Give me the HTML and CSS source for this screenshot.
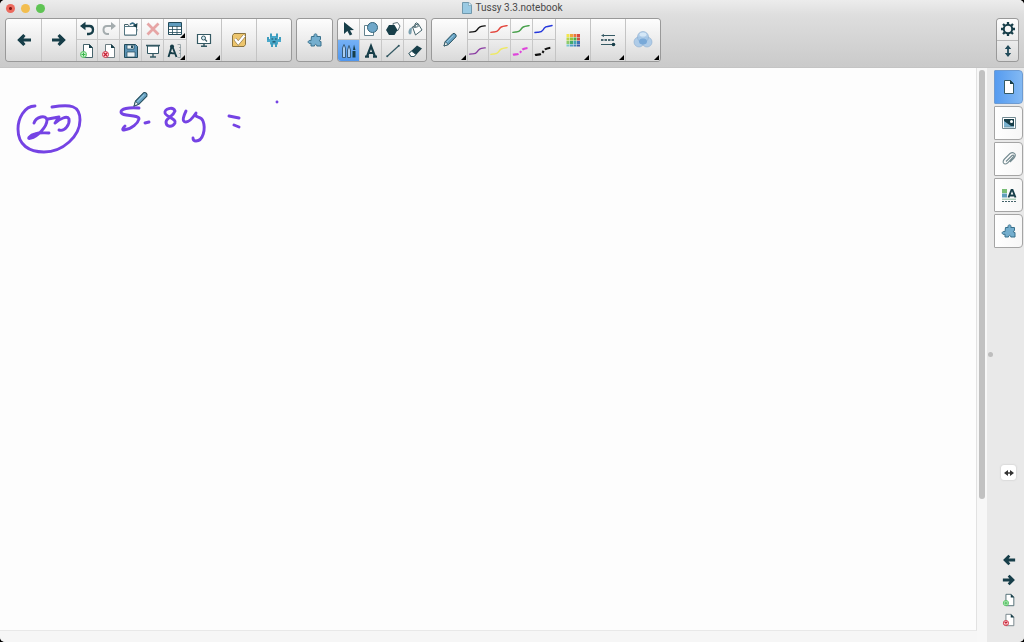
FILE: index.html
```html
<!DOCTYPE html>
<html lang="en">
<head>
<meta charset="utf-8">
<title>Tussy 3.3.notebook</title>
<link rel="stylesheet" href="styles.css">
</head>
<body>
<svg class="sprite" aria-hidden="true">
  <symbol id="arrow-left" viewBox="0 0 16 16"><path d="M1.200 8 7.300 2 9.500 4 7.500 6.400H15V9.600H7.500L9.500 12 7.300 14Z" fill="#173e49"/></symbol>
  <symbol id="arrow-right" viewBox="0 0 16 16"><path d="M14.800 8 8.700 2 6.500 4 8.500 6.400H1V9.600H8.500L6.500 12 8.700 14Z" fill="#173e49"/></symbol>
  <symbol id="page-add" viewBox="0 0 16 16"><path d="M4.500 1.500h6l3 3v10h-9Z" fill="#fff" stroke="#45636b"/><path d="M10 1v4h4Z" fill="#173e49"/><circle cx="4.500" cy="11.500" r="3" fill="#c9f2cd" stroke="#51c45e"/><path d="M2.500 11.500h4M4.500 9.500v4" stroke="#39b34a"/></symbol>
  <symbol id="page-remove" viewBox="0 0 16 16"><path d="M4.500 1.500h6l3 3v10h-9Z" fill="#fff" stroke="#6d7d82"/><path d="M10 1v4h4Z" fill="#173e49"/><circle cx="4.500" cy="11.500" r="3" fill="#fbd5d8" stroke="#d2394a"/><path d="m3 10 3 3m0-3-3 3" stroke="#c51f34" stroke-width="1.300"/></symbol>
  <symbol id="puzzle" viewBox="0 0 16 16"><path d="M4.500 4.500H7.200C5.800 1 11.200 1 9.800 4.500H13.500V7.500Q11.800 8 12.500 9.200L14 9.500V14H9.800C10.300 11.800 7 11.800 7.500 14H4V11.200C.2 12.600.2 7.300 4 8.700Z" fill="#74aece" stroke="#39718c"/></symbol>
  <symbol id="pen" viewBox="0 0 16 16"><path d="M2 14 3.300 9.500 10.800 1.700Q12.200.9 13.400 2.100T14 4.800L6.400 12.500Z" fill="#69a3c4" stroke="#234c5b"/><path d="m3.300 9.700 2.900 2.800L2 14Z" fill="#f4f7f8" stroke="#234c5b" stroke-width=".8"/><path d="m5 10 6.500-6.500" stroke="#93c5dd"/></symbol>
  <symbol id="stroke" viewBox="0 0 22 16"><path d="M2 11.500C5 10.500 8 12.500 10 9S13 5.500 19 4.500" fill="none" stroke="currentColor" stroke-width="1.500" stroke-linecap="round"/></symbol>
  <symbol id="stroke-dash" viewBox="0 0 22 16"><path d="M2 12C5 11 8 12.500 10 9S13 5.500 19 4.500" fill="none" stroke="currentColor" stroke-width="2.200" stroke-dasharray="6 2 2 2"/></symbol>
</svg>
<div class="app">
  <header class="chrome">
    <div class="titlebar">
      <div class="lights"><button class="light red" aria-label="Close"></button><button class="light yellow" aria-label="Minimize"></button><button class="light green" aria-label="Zoom"></button></div>
      <h1 class="title"><svg class="doc" viewBox="0 0 10 12"><path d="M.5.5H7l2.500 2.500v8.500h-9Z" fill="#9acae3" stroke="#7199ad"/><path d="M6.500.500V3.500h3" fill="#e3f3fa" stroke="#7199ad" stroke-width=".6"/></svg>Tussy 3.3.notebook</h1>
    </div>
    <div class="toolbar">
      <div class="group">
        <button class="big" aria-label="Previous page"><svg class="icon"><use href="#arrow-left"/></svg></button>
        <button class="big" aria-label="Next page"><svg class="icon"><use href="#arrow-right"/></svg></button>
        <div class="grid five">
          <button aria-label="Undo"><svg class="icon" viewBox="0 0 16 16"><path d="M5 5h5.500q3.500 0 3.500 3.700T10 13H8" fill="none" stroke="#173e49" stroke-width="2.300"/><path d="M1 5 6.500.8V9.200Z" fill="#173e49"/></svg></button>
          <button aria-label="Redo"><svg class="icon" viewBox="0 0 16 16"><path d="M11 5H6Q2.500 5 2.500 8.700T6 13H8" fill="none" stroke="#a4acae" stroke-width="2"/><path d="M15 5 10 1V9Z" fill="#a4acae"/></svg></button>
          <button aria-label="Open"><svg class="icon" viewBox="0 0 16 16"><path d="M1.500 14V3.500H5l1.500 2H12l2 3-1 5.500Z" fill="#f8fbfc" stroke="#45636b"/><path d="M1.500 14V5.500h12V14Z" fill="#fff" stroke="#527580"/><path d="M7 3.500q3-3 5 .5" fill="none" stroke="#326a84" stroke-width="1.600"/><path d="m14.500 2-.5 5-4-2.500Z" fill="#173e49"/></svg></button>
          <button aria-label="Delete"><svg class="icon" viewBox="0 0 16 16"><path d="m2.500 2.500 11 11m0-11-11 11" stroke="#e6a5a5" stroke-width="2.800"/></svg></button>
          <button class="more" aria-label="Table"><svg class="icon" viewBox="0 0 16 16"><path d="M1.500 1.500h13v12h-13Z" fill="#fff" stroke="#234c5b"/><path d="M2 2h12v3H2Z" fill="#5f9bbd"/><path d="M1.500 5.500h13m-13 3h13m-13 3h13M5.500 5v8.500M10 5v8.500" stroke="#234c5b" stroke-width=".8"/></svg></button>
          <button aria-label="Add page"><svg class="icon"><use href="#page-add"/></svg></button>
          <button aria-label="Delete page"><svg class="icon"><use href="#page-remove"/></svg></button>
          <button aria-label="Save"><svg class="icon" viewBox="0 0 16 16"><path d="M1.500 1.500h11l2 2v11h-13Z" fill="#5c93b4" stroke="#234c5b"/><path d="M4 2h7v4H4ZM4 9h8v5H4Z" fill="#e9f1f5" stroke="#234c5b" stroke-width=".7"/><path d="M8 2.500h2V5H8Z" fill="#234c5b"/></svg></button>
          <button aria-label="Screen shade"><svg class="icon" viewBox="0 0 16 16"><path d="M2.500 3h11v7.500h-11Z" fill="#fff" stroke="#345963"/><path d="M1 2.500h14" stroke="#345963" stroke-width="1.500"/><path d="M8 10.500v3M5 14h6" stroke="#345963" stroke-width="1.400"/></svg></button>
          <button class="more" aria-label="Measurement tools"><svg class="icon" viewBox="0 0 16 16"><path d="M5 2.500 1.500 14M5 2.500 9.500 14M2.500 9q3 2.500 6 .5" fill="none" stroke="#173e49" stroke-width="1.900"/><circle cx="5" cy="3.500" r="2" fill="#173e49"/><path d="M10.500 1.500h3v13h-3M12 4.500h2m-2 3h2m-2 3h2" fill="none" stroke="#8a999e" stroke-width=".8"/></svg></button>
        </div>
        <button class="big more" aria-label="Screen capture"><svg class="icon" viewBox="0 0 16 16"><path d="M1.500 2.500h13v9h-13Z" fill="#fff" stroke="#345963" stroke-width="1.200"/><path d="M8 12v1.500M5 14.200h6" stroke="#345963" stroke-width="1.500"/><circle cx="7.500" cy="6" r="2" fill="#d9edf5" stroke="#345963"/><path d="m9 7.500 2 2" stroke="#345963" stroke-width="1.300"/></svg></button>
        <button class="big" aria-label="Response"><svg class="icon" viewBox="0 0 16 16"><path d="M1.500 3.500 3 1.500h11.500v11l-1.500 2H1.500Z" fill="#edc56d" stroke="#8a7442"/><path d="m4 7 3.200 4L13.500 3.500" fill="none" stroke="#806c40" stroke-width="3.400"/><path d="m4 7 3.200 4L13.500 3.500" fill="none" stroke="#fff" stroke-width="2.400"/></svg></button>
        <button class="big" aria-label="Activity builder"><svg class="icon" viewBox="0 0 16 16"><path d="M4 4h8v3h3v3h-3v2.500H4V10H1V7h3Z" fill="#4aa9cb"/><path d="M5 5V1.500M11 5V1.500M2 8V5M14 8V5M6 11v4M10 11v4" stroke="#3d9cbd" stroke-width="2"/><path d="M5.500 7h1.700M9 7h1.700M6.500 9.800h3" stroke="#174c62" stroke-width="1.200"/></svg></button>
      </div>
      <div class="group"><button class="big" aria-label="Add-ons"><svg class="icon"><use href="#puzzle"/></svg></button></div>
      <div class="group">
        <div class="grid four">
          <button aria-label="Select"><svg class="icon" viewBox="0 0 16 16"><path d="M3 1v12L6.400 10l2.400 4.500 2.500-1.200L9 9.300l4-.3Z" fill="#173e49"/></svg></button>
          <button aria-label="Shapes"><svg class="icon" viewBox="0 0 16 16"><path d="M1.500 4.500h9v10h-9Z" fill="#fff" stroke="#62818d"/><circle cx="9.500" cy="6.500" r="5" fill="#6fa7c9" stroke="#35657b"/></svg></button>
          <button aria-label="Regular polygons"><svg class="icon" viewBox="0 0 16 16"><path d="M8 2.500 12.500 1.500 15 5l-2 4.500H9Z" fill="#fff" stroke="#5e737a"/><path d="M4 4h5.500L12.500 9 9.500 14H4L1 9Z" fill="#173e49"/></svg></button>
          <button aria-label="Fill"><svg class="icon" viewBox="0 0 16 16"><path d="m5.500 6 5.500-3.500 4 6.500-6.500 5Z" fill="#fff" stroke="#45636b"/><path d="M8 7V3q1-2.500 3 0v3M5.500 6h5" fill="none" stroke="#45636b"/><path d="M5 6Q1 8 1.500 12q1.500 3 3 0Z" fill="#789faf"/></svg></button>
          <button class="selected" aria-label="Pens" aria-pressed="true"><svg class="icon" viewBox="0 0 16 16"><path d="M1.500 14.500V5L3 1.500 4.500 5v9.500ZM6.500 14.500V7L8 2.500 9.500 7v7.500Z" fill="#a9cdf2" stroke="#31546f" stroke-width=".9"/><path d="M11.500 8h3v6.500h-3ZM12 7l1-5.500L14.500 7Z" fill="#173e49"/></svg></button>
          <button aria-label="Text"><svg class="icon" viewBox="0 0 16 16"><path d="M4 13.500 8 3l4 10.500M5.500 10h5M2 13.700h4M10 13.700h4" fill="none" stroke="#173e49" stroke-width="2.200"/></svg></button>
          <button aria-label="Line"><svg class="icon" viewBox="0 0 16 16"><path d="m2 13.500 12-11" stroke="#345963" stroke-width="1.200"/><circle cx="2.200" cy="13.300" r="1" fill="#345963"/><circle cx="13.800" cy="2.700" r="1" fill="#345963"/></svg></button>
          <button aria-label="Eraser"><svg class="icon" viewBox="0 0 16 16"><path d="m1.500 10.500 8.500-8 5 3-8 8.500H4Z" fill="#173e49"/><path d="m2 10.500 2.500-2.500 4.500 3.500L7 13.500H4Z" fill="#fff" stroke="#345963"/></svg></button>
        </div>
      </div>
      <div class="group">
        <button class="big more" aria-label="Pen"><svg class="icon"><use href="#pen"/></svg></button>
        <div class="grid four">
          <button class="black" aria-label="Black pen"><svg class="wide"><use href="#stroke"/></svg></button>
          <button class="crimson" aria-label="Red pen"><svg class="wide"><use href="#stroke"/></svg></button>
          <button class="leaf" aria-label="Green pen"><svg class="wide"><use href="#stroke"/></svg></button>
          <button class="blue" aria-label="Blue pen"><svg class="wide"><use href="#stroke"/></svg></button>
          <button class="purple" aria-label="Purple pen"><svg class="wide"><use href="#stroke"/></svg></button>
          <button class="lemon" aria-label="Yellow highlighter"><svg class="wide"><use href="#stroke"/></svg></button>
          <button class="magenta" aria-label="Magenta dashed pen"><svg class="wide"><use href="#stroke-dash"/></svg></button>
          <button class="black" aria-label="Black dashed pen"><svg class="wide"><use href="#stroke-dash"/></svg></button>
        </div>
        <button class="big more" aria-label="Color"><svg class="icon" viewBox="0 0 16 16"><path d="M1.500 2h3v3h-3Z" fill="#f4e54c"/><path d="M5 2h3v3H5Z" fill="#f0a83c"/><path d="M8.500 2h3v3h-3Z" fill="#eb7440"/><path d="M12 2h3v3h-3Z" fill="#d94b43"/><path d="M1.500 5.500h3v3h-3Z" fill="#b9d749"/><path d="M5 5.500h3v3H5Z" fill="#8dc63f"/><path d="M8.500 5.500h3v3h-3Z" fill="#4daf45"/><path d="M12 5.500h3v3h-3Z" fill="#c75443"/><path d="M1.500 9h3v3h-3Z" fill="#8dcc6b"/><path d="M5 9h3v3H5Z" fill="#44a96b"/><path d="M8.500 9h3v3h-3Z" fill="#45a4b7"/><path d="M12 9h3v3h-3Z" fill="#406fb4"/><path d="M1.500 12.500h3v2h-3Z" fill="#79c6cf"/><path d="M5 12.500h3v2H5Z" fill="#519ec9"/><path d="M8.500 12.500h3v2h-3Z" fill="#3d83bd"/><path d="M12 12.500h3v2h-3Z" fill="#3c589f"/></svg></button>
        <button class="big more" aria-label="Line style"><svg class="icon" viewBox="0 0 16 16"><path d="M2 3.500h13M1 12.500h13" stroke="#345963" stroke-width="1.200"/><path d="M1 8h14" stroke="#173e49" stroke-width="1.300" stroke-dasharray="2.500 1"/><path d="M1 3.500 4 2v3Z" fill="#345963"/><circle cx="13.500" cy="12.500" r="1.800" fill="#173e49"/></svg></button>
        <button class="big more" aria-label="Transparency"><svg class="large" viewBox="0 0 20 20"><g fill="#a5c7e8" fill-opacity=".85" stroke="#8bacce" stroke-width=".6"><circle cx="6" cy="12" r="5"/><circle cx="14" cy="12" r="5"/><circle cx="10" cy="7" r="5.500"/></g><ellipse cx="10" cy="11.500" rx="4" ry="3" fill="#79a9d8"/><ellipse cx="10" cy="4.500" rx="3.500" ry="2" fill="#d4e7f7"/></svg></button>
      </div>
      <div class="group settings">
        <button aria-label="Customize"><svg class="icon" viewBox="0 0 16 16"><circle cx="8" cy="8" r="4.200" fill="none" stroke="#173e49" stroke-width="2"/><g stroke="#173e49" stroke-width="2.300"><path d="M8 1v2.500M8 12.500V15M1 8h2.500M12.500 8H15M3 3l1.800 1.800M11.200 11.200 13 13M13 3l-1.800 1.800M4.800 11.200 3 13"/></g></svg></button>
        <button aria-label="Move toolbar"><svg class="icon" viewBox="0 0 16 16"><path d="M8 4v8" stroke="#234c5b" stroke-width="1.800"/><path d="m8 2 3.200 4H4.800ZM8 14l3.200-4H4.800Z" fill="#234c5b"/></svg></button>
      </div>
    </div>
  </header>
  <main class="workspace">
    <section class="canvas" aria-label="Notebook page">
      <svg class="ink" viewBox="0 68 300 100" role="img" aria-label="Handwritten: circled 23, 5.8y =">
        <g fill="none" stroke="#7543e4" stroke-width="2.900" stroke-linecap="round" stroke-linejoin="round">
          <path d="M35 106C24 106 18 119 18 129 18 145 29 152 44 152 63 152 80 136 80 120 80 105 70 104 52 107"/>
          <path d="M34 123C36 117 46 114 47 120 47 127 37 137 31 138 26 140 30 135 35 134 41 132 43 133 49 133"/>
          <path d="M48 119 59 117 55 123C60 119 67 115 69 119 70 124 65 132 59 130"/>
          <path d="M139 108C128 107 121 109 121 112 121 117 139 114 139 119 138 123 132 129 124 130Q121 130 125 126M145 123 149 122"/>
          <path d="M175 111C173 106 164 109 165 113 166 117 177 119 175 123 172 128 166 127 166 122 166 118 173 117 175 111"/>
          <path d="M186 111C184 115 181 122 186 122 190 122 194 116 196 113 194 119 201 115 203 121 206 129 203 141 196 141Q193 141 193 138"/>
          <path d="m229 116 10 2M234 125l5 2M277 102v0"/>
        </g>
        <use href="#pen" x="132" y="91" width="17" height="17"/>
      </svg>
    </section>
    <div class="track"><div class="thumb"></div></div>
    <aside class="sidebar">
      <span class="handle"></span>
      <nav class="tabs" aria-label="Panels">
        <button class="tab active" aria-label="Page sorter"><svg class="icon" viewBox="0 0 16 16"><path d="M3.500 1.500h6l3 3v10h-9Z" fill="#fff" stroke="#345963"/><path d="M9 1v4h4Z" fill="#173e49"/></svg></button>
        <button class="tab" aria-label="Gallery"><svg class="icon" viewBox="0 0 16 16"><path d="M1.500 2.500h13v11h-13Z" fill="#fff" stroke="#718991"/><path d="M3 4h10v7H3Z" fill="#173e49"/><path d="m3 6 7 5H3Z" fill="#78b2d0"/><circle cx="10.500" cy="6.500" r="1.500" fill="#fff"/><path d="M3 11h10v1.500H3Z" fill="#78a7bd"/></svg></button>
        <button class="tab" aria-label="Attachments"><svg class="icon" viewBox="0 0 16 16"><path d="m5 10.500 6-6q1.500-1 2 .5L6.500 12Q4 14 2.500 12q-1-2 1-4L9 2.500q3-2 5 .5 1 2-1 4l-4 4" fill="none" stroke="#748b91" stroke-width="1.100"/></svg></button>
        <button class="tab" aria-label="Properties"><svg class="icon" viewBox="0 0 16 16"><path d="M1 2h5v4H1Z" fill="#78bd75"/><path d="M1 6.500h5v4H1Z" fill="#5e9ebc"/><path d="M7.500 10.500 10.500 3h1l3 7.500M8.500 8.500h5" fill="none" stroke="#173e49" stroke-width="1.900"/><path d="M1 12.200h14" stroke="#8cbc9a"/><path d="M1 14.500h14" stroke="#45636b" stroke-dasharray="2 1"/></svg></button>
        <button class="tab" aria-label="Add-ons"><svg class="icon"><use href="#puzzle"/></svg></button>
      </nav>
      <button class="swap" aria-label="Move sidebar"><svg class="small" viewBox="0 0 14 14"><path d="M4 7h6" stroke="#333" stroke-width="1.500"/><path d="m2 7 4-3v6ZM12 7 8 4v6Z" fill="#333"/></svg></button>
      <div class="pager">
        <button aria-label="Previous page"><svg class="small"><use href="#arrow-left"/></svg></button>
        <button aria-label="Next page"><svg class="small"><use href="#arrow-right"/></svg></button>
        <button aria-label="Add page"><svg class="small"><use href="#page-add"/></svg></button>
        <button aria-label="Delete page"><svg class="small"><use href="#page-remove"/></svg></button>
      </div>
    </aside>
  </main>
</div>
</body>
</html>
```
FILE: styles.css
```css
* { box-sizing: border-box; }

body {
  margin: 0;
  background: #000;
  font-family: Roboto, "Liberation Sans", sans-serif;
}

button {
  appearance: none;
  margin: 0;
  padding: 0;
  border: 0;
  background: transparent;
  display: flex;
  align-items: center;
  justify-content: center;
}

svg { display: block; }
.sprite { position: absolute; width: 0; height: 0; }
.icon { width: 16px; height: 16px; }
.large { width: 20px; height: 20px; }
.small { width: 14px; height: 14px; }
.wide { width: 22px; height: 16px; }

.app {
  display: flex;
  flex-direction: column;
  min-height: 100vh;
  overflow: hidden;
  border-radius: 5px;
  background: #e9e9e9;
}

.chrome {
  background: linear-gradient(#ececec, #dedede 15px, #cacaca);
  border-bottom: 1px solid #c4c4c4;
}

.titlebar {
  display: grid;
  grid-template-columns: 1fr auto 1fr;
  align-items: center;
  height: 16px;
  padding: 0 6px;
}

.lights { display: flex; gap: 6px; }
.light { width: 9px; height: 9px; border-radius: 50%; }
.red { background: radial-gradient(circle, #7c1714 0 1px, #ec6a5e 2px); }
.yellow { background: #f2bd4e; }
.green { background: #5fc454; }

.title {
  display: flex;
  align-items: center;
  gap: 4px;
  margin: 0;
  font-size: 10px;
  line-height: 16px;
  font-weight: 400;
  color: #484848;
}

.doc { width: 10px; height: 12px; }

.toolbar {
  display: flex;
  gap: 6px;
  padding: 3px 6px 6px;
}

.group {
  display: flex;
  height: 42px;
  overflow: hidden;
  border-radius: 3px;
  background: linear-gradient(#fdfdfd, #ededed 50%, #d9d9d9);
  box-shadow: 0 0 0 1px #999;
}

.big { width: 35px; }
.big + .big, .big + .grid, .grid + .big { border-left: 1px solid #c4c4c4; }

.more { position: relative; }
.more::after {
  content: "";
  position: absolute;
  right: 1px;
  bottom: 1px;
  border-left: 5px solid transparent;
  border-bottom: 5px solid #000;
}

.grid {
  display: grid;
  grid-auto-rows: 1fr;
}

.five { grid-template-columns: repeat(5, 22px); }
.four { grid-template-columns: repeat(4, 22px); }
.big + .grid { grid-template-columns: 21px; grid-auto-columns: 22px; }
.big + .five { grid-template-columns: 21px repeat(4, 22px); }
.big + .four { grid-template-columns: 21px repeat(3, 22px); }

.grid button {
  border-right: 1px solid #c8c8c8;
  border-bottom: 1px solid #c8c8c8;
}

.five button:nth-child(5n), .four button:nth-child(4n) { border-right: 0; }
.five button:nth-child(n+6), .four button:nth-child(n+5) { border-bottom: 0; }
.grid .selected { background: linear-gradient(#75b1f5, #4f96ee); }

.black { color: #111; }
.crimson { color: #e3473e; }
.leaf { color: #47a04b; }
.blue { color: #2437dc; }
.purple { color: #8c3ea3; }
.lemon { color: #eee965; }
.magenta { color: #df45db; }

.settings {
  flex-direction: column;
  width: 21px;
  margin-left: auto;
}
.settings button { flex: 1; }
.settings button + button { border-top: 1px solid #b8b8b8; }

.workspace {
  display: flex;
  flex: 1;
}

.canvas {
  flex: 1;
  margin-bottom: 11px;
  background: #fdfdfd;
  border-right: 1px solid #e2e2e2;
  border-bottom: 1px solid #e8e8e8;
  box-shadow: 0 11px #f6f6f6;
}

.ink { width: 300px; height: 100px; }

.track {
  width: 10px;
  padding: 2px 2px 0;
  background: #f7f7f7;
}

.thumb {
  height: 75%;
  border-radius: 3px;
  background: #c1c1c1;
}

.sidebar {
  position: relative;
  display: flex;
  flex-direction: column;
  width: 37px;
  padding: 2px 1px 14px 7px;
  background: #e9e9e9;
}

.handle {
  position: absolute;
  left: 1px;
  top: 50%;
  width: 5px;
  height: 5px;
  margin-top: -3px;
  border-radius: 50%;
  background: #bdbdbd;
}

.tabs { display: grid; gap: 2px; }

.tab {
  height: 34px;
  border: 1px solid #a5a5a5;
  border-radius: 1px 4px 4px 1px;
  background: linear-gradient(90deg, #fff, #f7f7f7);
}

.active {
  border-color: #6e9bd1;
  background: linear-gradient(90deg, #559bf0, #83b9f3);
}

.swap {
  align-self: center;
  width: 15px;
  height: 15px;
  margin: auto 0 72px;
  border-radius: 3px;
  background: #fff;
  box-shadow: 0 0 2px #bbb;
}

.pager {
  display: grid;
  justify-content: center;
  gap: 4px;
}
.pager button { height: 16px; }
```
